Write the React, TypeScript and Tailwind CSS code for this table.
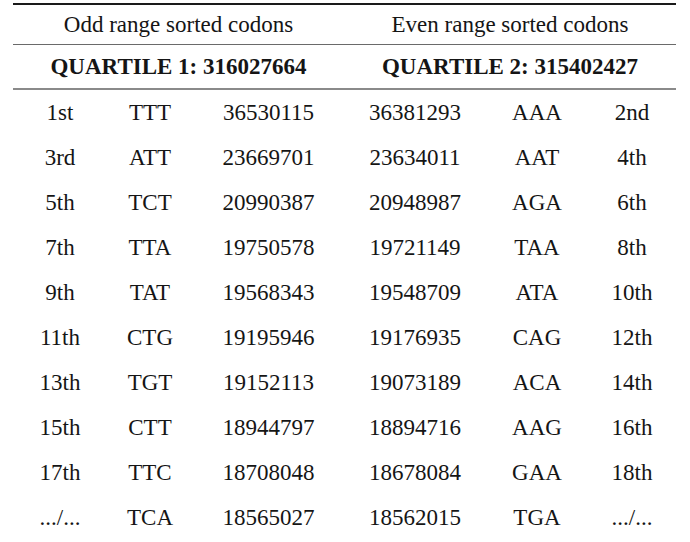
const rows = [
  ['1st', 'TTT', '36530115', '36381293', 'AAA', '2nd'],
  ['3rd', 'ATT', '23669701', '23634011', 'AAT', '4th'],
  ['5th', 'TCT', '20990387', '20948987', 'AGA', '6th'],
  ['7th', 'TTA', '19750578', '19721149', 'TAA', '8th'],
  ['9th', 'TAT', '19568343', '19548709', 'ATA', '10th'],
  ['11th', 'CTG', '19195946', '19176935', 'CAG', '12th'],
  ['13th', 'TGT', '19152113', '19073189', 'ACA', '14th'],
  ['15th', 'CTT', '18944797', '18894716', 'AAG', '16th'],
  ['17th', 'TTC', '18708048', '18678084', 'GAA', '18th'],
  ['.../...', 'TCA', '18565027', '18562015', 'TGA', '.../...'],
];

const cols = 'grid grid-cols-[94px_86px_151px_142px_102px_88px]';

export default function App() {
  return (
    <div className="w-[690px] h-[542px] bg-white overflow-hidden pt-[3px] pl-[13px] font-['Liberation_Serif',serif] text-[23px] text-[#151515]">
      <div className="w-[663px]">
        <div className="h-[2px] bg-[#1a1a1a]" />
        <div className="grid grid-cols-[331px_332px] h-[39px] items-center text-center leading-none">
          <div>Odd range sorted codons</div>
          <div>Even range sorted codons</div>
        </div>
        <div className="h-px bg-[#6a6a6a]" />
        <div className="grid grid-cols-[331px_332px] h-[43px] items-center text-center font-bold leading-none">
          <div>QUARTILE 1: 316027664</div>
          <div>QUARTILE 2: 315402427</div>
        </div>
        <div className="h-[2px] bg-[#8a8a8a]" />
        {rows.map((r, i) => (
          <div key={i} className={`${cols} h-[45px] items-center text-center leading-none`}>
            {r.map((c, j) => (
              <div key={j}>{c}</div>
            ))}
          </div>
        ))}
      </div>
    </div>
  );
}
